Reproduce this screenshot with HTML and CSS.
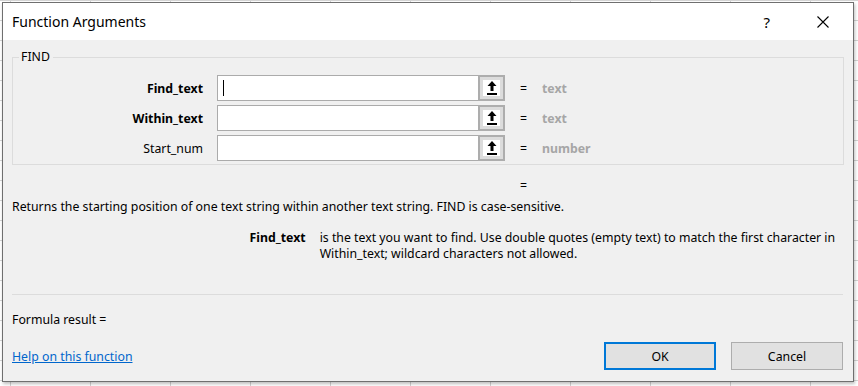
FILE: index.html
```html
<!DOCTYPE html>
<html>
<head>
<meta charset="utf-8">
<link rel="stylesheet" href="styles.css">
</head>
<body>
<div class="dialog">
  <div class="titlebar">
    <span class="title">Function Arguments</span>
    <span class="help">?</span>
    <svg class="close" width="12" height="12" viewBox="0 0 12 12"><path d="M0.5 0.5 L11.5 11.5 M11.5 0.5 L0.5 11.5" stroke="#000" stroke-width="1.1" fill="none"/></svg>
  </div>
  <div class="body">
    <div class="group">
      <span class="legend">FIND</span>
      <div class="args">
        <div class="label bold">Find_text</div>
        <div class="field"><div class="input"><span class="caret"></span></div><div class="refbtn"><span class="refinner"><svg width="10" height="14" viewBox="0 0 10 14"><path d="M5 0 L0.5 5 L3.5 5 L3.5 10 L6.5 10 L6.5 5 L9.5 5 Z" fill="#000"/><rect x="0" y="12" width="10" height="2" fill="#000"/></svg></span></div></div>
        <div class="eq">=</div>
        <div class="val">text</div>

        <div class="label bold">Within_text</div>
        <div class="field"><div class="input"></div><div class="refbtn"><span class="refinner"><svg width="10" height="14" viewBox="0 0 10 14"><path d="M5 0 L0.5 5 L3.5 5 L3.5 10 L6.5 10 L6.5 5 L9.5 5 Z" fill="#000"/><rect x="0" y="12" width="10" height="2" fill="#000"/></svg></span></div></div>
        <div class="eq">=</div>
        <div class="val">text</div>

        <div class="label">Start_num</div>
        <div class="field"><div class="input"></div><div class="refbtn"><span class="refinner"><svg width="10" height="14" viewBox="0 0 10 14"><path d="M5 0 L0.5 5 L3.5 5 L3.5 10 L6.5 10 L6.5 5 L9.5 5 Z" fill="#000"/><rect x="0" y="12" width="10" height="2" fill="#000"/></svg></span></div></div>
        <div class="eq">=</div>
        <div class="val">number</div>
      </div>
    </div>
    <div class="result-eq">=</div>
    <div class="desc">Returns the starting position of one text string within another text string. FIND is case-sensitive.</div>
    <div class="argdesc">
      <div class="argname">Find_text</div>
      <div class="argtext">is the text you want to find. Use double quotes (empty text) to match the first character in Within_text; wildcard characters not allowed.</div>
    </div>
    <div class="sep"></div>
    <div class="formula">Formula result =</div>
    <div class="footer">
      <a class="helplink" href="#">Help on this function</a>
      <div class="buttons">
        <button class="btn ok">OK</button>
        <button class="btn">Cancel</button>
      </div>
    </div>
  </div>
</div>
</body>
</html>
```
FILE: styles.css
```css
html, body {
  margin: 0;
  padding: 0;
}
body {
  width: 858px;
  height: 386px;
  overflow: hidden;
  background-color: #fff;
  background-image:
    linear-gradient(to right, #d4d4d4 1px, transparent 1px),
    linear-gradient(to bottom, #d4d4d4 1px, transparent 1px);
  background-size: 80px 20px;
  background-position: 10px 0, 0 0;
  font-family: "Noto Sans", "Open Sans", sans-serif;
  font-size: 12.3px;
  color: #000;
}
.dialog {
  margin: 2px 0 0 2px;
  width: 850px;
  height: 378px;
  border: 1px solid #6f6f6f;
  background: #f0f0f0;
  box-shadow: 1px 2px 3px rgba(0,0,0,0.25);
  display: flex;
  flex-direction: column;
}
.titlebar {
  height: 37px;
  background: #fff;
  display: flex;
  align-items: center;
  padding: 0 0 0 9px;
}
.title {
  font-size: 14px;
  flex: 1;
  padding-bottom: 1px;
}
.help {
  font-size: 15px;
  margin-right: 47px;
}
.close {
  margin-right: 24px;
}
.body {
  flex: 1;
  padding: 0 9px;
  display: flex;
  flex-direction: column;
}
.group {
  margin-top: 17px;
  border: 1px solid #dcdcdc;
  height: 108px;
  position: relative;
  box-sizing: border-box;
}
.legend {
  position: absolute;
  left: 6px;
  top: -9px;
  background: #f0f0f0;
  padding: 0 3px 0 2px;
  line-height: 16px;
}
.args {
  margin-top: 17px;
  display: grid;
  grid-template-columns: 190px 288px 37px auto;
  column-gap: 14px;
  row-gap: 4px;
  grid-auto-rows: 26px;
  align-items: center;
}
.args .eq {
  margin-left: 1px;
}
.label {
  text-align: right;
}
.bold {
  font-weight: bold;
}
.field {
  display: flex;
  height: 26px;
}
.input {
  flex: 1;
  background: #fff;
  border: 1px solid #ababab;
  border-right: none;
  display: flex;
  align-items: center;
  padding-left: 5px;
}
.caret {
  width: 1px;
  height: 16px;
  background: #000;
}
.refbtn {
  width: 21px;
  border: 1px solid #adadad;
  background: #fff;
  padding: 2px;
  box-sizing: content-box;
  display: flex;
  align-items: center;
  justify-content: center;
  box-shadow: inset 0 0 0 1px #adadad, inset 0 0 0 4px #dcdcdc;
}
.refinner {
  display: flex;
}
.val {
  color: #a6a6a6;
  font-weight: bold;
  margin-left: -28px;
}
.result-eq {
  margin: 13px 0 0 508px;
  line-height: 16px;
}
.desc {
  margin-top: 5px;
  line-height: 16px;
}
.argdesc {
  margin-top: 15px;
  display: flex;
  line-height: 16px;
}
.argname {
  width: 308px;
  text-align: right;
  font-weight: bold;
  padding-right: 14px;
  box-sizing: border-box;
}
.argtext {
  width: 525px;
}
.sep {
  margin-top: 32px;
  height: 1px;
  background: #dcdcdc;
  margin-right: 1px;
}
.formula {
  margin-top: 17px;
  line-height: 16px;
}
.footer {
  margin-top: 14px;
  display: flex;
  align-items: flex-end;
  justify-content: space-between;
}
.helplink {
  color: #0066cc;
  text-decoration: underline;
  line-height: 16px;
  margin-bottom: 5px;
}
.buttons {
  display: flex;
  gap: 15px;
  margin-right: 1px;
}
.btn {
  width: 112px;
  height: 28px;
  font-family: inherit;
  font-size: 12.3px;
  background: #e1e1e1;
  border: 1px solid #adadad;
  color: #000;
  padding: 0;
}
.btn.ok {
  border: 2px solid #0078d7;
}
```
